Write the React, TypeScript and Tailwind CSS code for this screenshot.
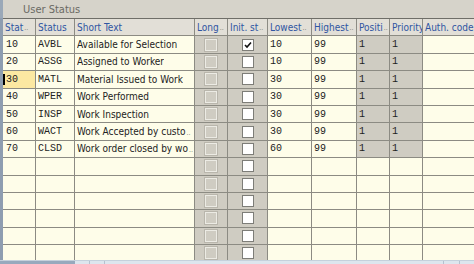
import React from "react";

const cols = [
  { label: "Stat", trunc: true },
  { label: "Status", trunc: false },
  { label: "Short Text", trunc: false },
  { label: "Long", trunc: true },
  { label: "Init. st", trunc: true },
  { label: "Lowest", trunc: true },
  { label: "Highest", trunc: true },
  { label: "Positi", trunc: true },
  { label: "Priority", trunc: false },
  { label: "Auth. code", trunc: false },
];

type Row = {
  stat: string;
  status: string;
  text: string;
  textTrunc?: boolean;
  init: boolean;
  low: string;
  high: string;
  pos: string;
  prio: string;
};

const data: Row[] = [
  { stat: "10", status: "AVBL", text: "Available for Selection", init: true, low: "10", high: "99", pos: "1", prio: "1" },
  { stat: "20", status: "ASSG", text: "Assigned to Worker", init: false, low: "10", high: "99", pos: "1", prio: "1" },
  { stat: "30", status: "MATL", text: "Material Issued to Work", init: false, low: "30", high: "99", pos: "1", prio: "1" },
  { stat: "40", status: "WPER", text: "Work Performed", init: false, low: "30", high: "99", pos: "1", prio: "1" },
  { stat: "50", status: "INSP", text: "Work Inspection", init: false, low: "30", high: "99", pos: "1", prio: "1" },
  { stat: "60", status: "WACT", text: "Work Accepted by custo", textTrunc: true, init: false, low: "30", high: "99", pos: "1", prio: "1" },
  { stat: "70", status: "CLSD", text: "Work order closed by wo", textTrunc: true, init: false, low: "60", high: "99", pos: "1", prio: "1" },
];

const TOTAL_ROWS = 13;

const sans = "font-['DejaVu_Sans_Condensed','Liberation_Sans',sans-serif]";
const mono = "font-['Liberation_Mono',monospace]";

function Dots() {
  return <span className="ml-[1px] text-[7px] leading-none text-[#7a7a72] self-end mb-[3px] shrink-0">..</span>;
}

function DisabledBox() {
  return <div className="w-[12px] h-[12px] border border-[#ecebe4] bg-[#cfccc2] outline outline-1 outline-[#b9b6ac]" />;
}

function WhiteBox({ checked }: { checked: boolean }) {
  return (
    <div className="w-[12px] h-[12px] border border-[#7d7d78] bg-white flex items-center justify-center">
      {checked && (
        <svg width="8" height="8" viewBox="0 0 8 8">
          <path d="M1 4 L3 6 L7 1.5" stroke="#111" strokeWidth="1.6" fill="none" />
        </svg>
      )}
    </div>
  );
}

export default function App() {
  const rows: (Row | null)[] = [];
  for (let i = 0; i < TOTAL_ROWS; i++) rows.push(data[i] ?? null);

  const cell = "border-r border-b border-[#8c8b83] flex items-center overflow-hidden whitespace-nowrap";

  return (
    <div className={`w-[474px] h-[264px] overflow-hidden flex flex-col bg-[#d6d3ca] ${sans}`}>
      <div className="h-[18px] shrink-0 flex items-center pl-[20px] pt-[2px] text-[11px] text-[#6a6a64] border-l-[3px] border-[#9aa8b8]">
        User Status
      </div>
      <div className="flex-1 min-h-0 flex overflow-hidden">
        <div className="w-[3px] shrink-0 bg-[#8e9db0]" />
        <div
          className="flex-1 grid border-t border-[#6f6e68] grid-cols-[33px_39px_120px_33px_40px_44px_45px_33px_33px_1fr] auto-rows-[17.4px] content-start"
        >
          {cols.map((c, i) => (
            <div
              key={c.label}
              className={`h-[17px] bg-[#e2dfd7] border-r border-b border-[#8c8b83] flex items-center pl-[2px] overflow-hidden whitespace-nowrap text-[10px] text-[#2f55a2] ${i === cols.length - 1 ? "border-r-0" : ""}`}
            >
              <span>{c.label}</span>
              {c.trunc && <Dots />}
            </div>
          ))}
          {rows.map((r, ri) => (
            <React.Fragment key={ri}>
              <div className={`${cell} pl-[3px] text-[10px] text-[#222] ${mono} ${ri === 2 ? "bg-[#fce8a2]" : "bg-[#fefde9]"} relative`}>
                {ri === 2 && <span className="absolute left-0 top-[3px] w-[2px] h-[11px] bg-black" />}
                {r?.stat}
              </div>
              <div className={`${cell} pl-[2px] text-[10px] text-[#222] bg-[#fefde9] ${mono}`}>{r?.status}</div>
              <div className={`${cell} pl-[2px] text-[10px] text-[#222] bg-[#fefde9]`}>
                <span className="overflow-hidden">{r?.text}</span>
                {r?.textTrunc && <Dots />}
              </div>
              <div className={`${cell} justify-center bg-[#cfccc2]`}>
                <DisabledBox />
              </div>
              <div className={`${cell} justify-center bg-[#cfccc2]`}>
                <WhiteBox checked={!!r?.init} />
              </div>
              <div className={`${cell} pl-[2px] text-[10px] text-[#222] bg-[#fefde9] ${mono}`}>{r?.low}</div>
              <div className={`${cell} pl-[2px] text-[10px] text-[#222] bg-[#fefde9] ${mono}`}>{r?.high}</div>
              <div className={`${cell} pl-[2px] text-[10px] text-[#222] ${r ? "bg-[#cfccc2]" : "bg-[#fefde9]"} ${mono}`}>{r?.pos}</div>
              <div className={`${cell} pl-[2px] text-[10px] text-[#222] ${r ? "bg-[#cfccc2]" : "bg-[#fefde9]"} ${mono}`}>{r?.prio}</div>
              <div className={`${cell} border-r-0 bg-[#fefde9]`} />
            </React.Fragment>
          ))}
        </div>
      </div>
      <div className="h-[4px] shrink-0 flex bg-[#dde6ee] border-t border-[#c5d1dc]">
        <div className="w-[75px] bg-[#97a9bd]" />
        <div className="w-[14px]" />
        <div className="w-[1px] bg-[#b5c2cf]" />
        <div className="w-[14px]" />
        <div className="w-[1px] bg-[#b5c2cf]" />
        <div className="flex-1" />
        <div className="w-[1px] bg-[#b5c2cf]" />
        <div className="w-[15px]" />
        <div className="w-[1px] bg-[#b5c2cf]" />
        <div className="w-[14px]" />
      </div>
    </div>
  );
}
